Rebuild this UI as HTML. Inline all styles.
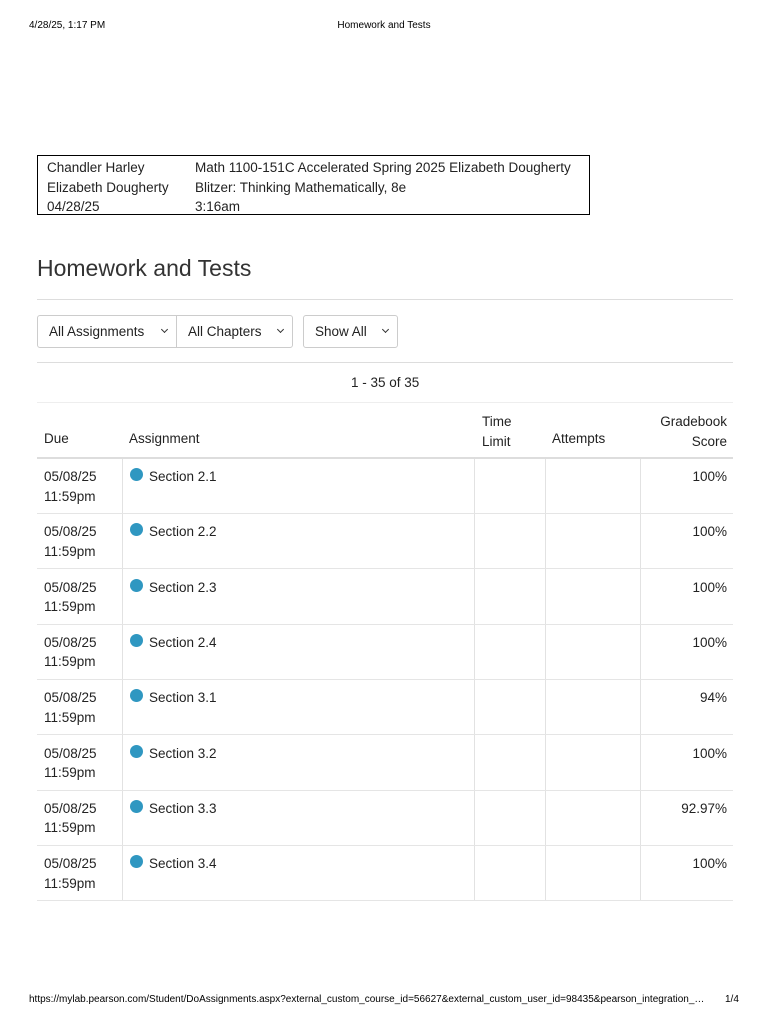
<!DOCTYPE html>
<html><head><meta charset="utf-8"><style>
*{margin:0;padding:0;box-sizing:border-box}
body{width:768px;height:1024px;background:#fff;font-family:"Liberation Sans",sans-serif;color:#222;position:relative;overflow:hidden}
.a{position:absolute;white-space:nowrap}
.sm{font-size:10px;color:#000}
.t{font-size:13.5px}
.hl{position:absolute;left:37px;width:696px;height:1px;background:#ddd}
.vl{position:absolute;width:1px;background:#e2e2e2}
.sel{position:absolute;top:315px;height:33px;border:1px solid #ccc;border-radius:3px;font-size:13.5px;padding:8px 11px}
.chev{position:absolute;top:11px;width:5px;height:5px;border-right:1.3px solid #333;border-bottom:1.3px solid #333;transform:rotate(45deg)}
.dot{position:absolute;width:13px;height:13px;border-radius:50%;background:#2f97c1}
</style></head><body>
<div class="a sm" style="left:29px;top:20px">4/28/25, 1:17 PM</div>
<div class="a sm" style="left:384px;top:20px;transform:translateX(-50%)">Homework and Tests</div>
<div class="a sm" style="left:29px;top:994px">https://mylab.pearson.com/Student/DoAssignments.aspx?external_custom_course_id=56627&amp;external_custom_user_id=98435&amp;pearson_integration_…</div>
<div class="a sm" style="left:725px;top:994px">1/4</div>

<div style="position:absolute;left:37px;top:155px;width:553px;height:60px;border:1px solid #000"></div>
<div class="a t" style="left:47px;top:158px;line-height:19.5px">Chandler Harley<br>Elizabeth Dougherty<br>04/28/25</div>
<div class="a t" style="left:195px;top:158px;line-height:19.5px">Math 1100-151C Accelerated Spring 2025 Elizabeth Dougherty<br>Blitzer: Thinking Mathematically, 8e<br>3:16am</div>

<div class="a" style="left:37px;top:255px;font-size:23px;color:#333">Homework and Tests</div>
<div class="hl" style="top:299px"></div>

<div class="sel" style="left:37px;width:140px;border-radius:3px 0 0 3px">All Assignments<div class="chev" style="left:124px"></div></div>
<div class="sel" style="left:176px;width:117px;border-radius:0 3px 3px 0">All Chapters<div class="chev" style="left:101px"></div></div>
<div class="sel" style="left:303px;width:95px">Show All<div class="chev" style="left:79px"></div></div>

<div class="hl" style="top:362px"></div>
<div class="a t" style="left:351px;top:375px">1 - 35 of 35</div>
<div class="hl" style="top:402px;background:#eee"></div>

<div class="a t" style="left:44px;top:431px">Due</div>
<div class="a t" style="left:129px;top:431px">Assignment</div>
<div class="a t" style="left:482px;top:412px;line-height:19.5px">Time<br>Limit</div>
<div class="a t" style="left:552px;top:431px">Attempts</div>
<div class="a t" style="right:41px;top:412px;line-height:19.5px;text-align:right">Gradebook<br>Score</div>
<div class="hl" style="top:457px;height:2px;background:#ddd"></div>

<div class="vl" style="left:122px;top:459px;height:441px"></div>
<div class="vl" style="left:474px;top:459px;height:441px"></div>
<div class="vl" style="left:545px;top:459px;height:441px"></div>
<div class="vl" style="left:640px;top:459px;height:441px"></div>

<div id="rows"></div>
<script>
var d=[["2.1","100%"],["2.2","100%"],["2.3","100%"],["2.4","100%"],["3.1","94%"],["3.2","100%"],["3.3","92.97%"],["3.4","100%"]];
var h="";
d.forEach(function(r,i){var y=459+i*55.3;
h+='<div class="a t" style="left:44px;top:'+(y+8)+'px;line-height:19.5px">05/08/25<br>11:59pm</div>';
h+='<div class="dot" style="left:130px;top:'+(y+9)+'px"></div>';
h+='<div class="a t" style="left:149px;top:'+(y+8)+'px;line-height:19.5px">Section '+r[0]+'</div>';
h+='<div class="a t" style="right:41px;top:'+(y+8)+'px;line-height:19.5px">'+r[1]+'</div>';
h+='<div class="hl" style="top:'+(y+54)+'px;background:#e5e5e5"></div>';});
document.getElementById("rows").innerHTML=h;
</script>
</body></html>
